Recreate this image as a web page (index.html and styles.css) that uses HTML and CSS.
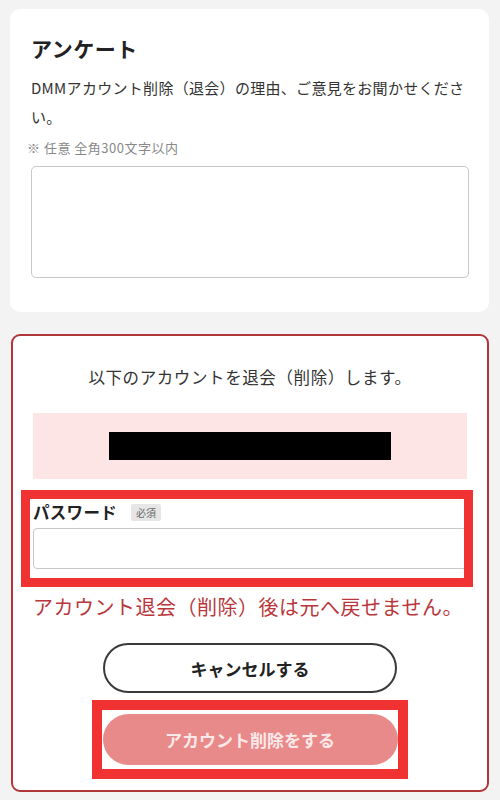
FILE: index.html
```html
<!DOCTYPE html>
<html lang="ja">
<head>
<meta charset="utf-8">
<link rel="stylesheet" href="styles.css">
</head>
<body>
<main class="page">
  <section class="card survey">
    <h2 class="survey-title">アンケート</h2>
    <p class="survey-desc">DMMアカウント削除（退会）の理由、ご意見をお聞かせください。</p>
    <p class="survey-note">※ 任意 全角300文字以内</p>
    <textarea class="survey-input"></textarea>
  </section>
  <section class="card confirm">
    <p class="confirm-lead">以下のアカウントを退会（削除）します。</p>
    <div class="account-box"><span class="account-mask"></span></div>
    <div class="field">
      <div class="field-label"><span class="label-text">パスワード</span><span class="badge">必須</span></div>
      <input class="field-input" type="password">
      <span class="highlight highlight-field"></span>
    </div>
    <p class="warning">アカウント退会（削除）後は元へ戻せません。</p>
    <div class="actions">
      <button class="btn btn-cancel">キャンセルする</button>
      <div class="btn-wrap">
        <button class="btn btn-delete">アカウント削除をする</button>
        <span class="highlight highlight-btn"></span>
      </div>
    </div>
  </section>
</main>
</body>
</html>
```
FILE: styles.css
```css
body {
  margin: 0;
  background: #f3f3f3;
  font-family: "Noto Sans CJK JP", "Noto Sans", sans-serif;
  color: #333;
}
.page {
  padding: 9px 11px 0 10px;
  display: flex;
  flex-direction: column;
  gap: 22px;
}
.card {
  background: #fff;
  border-radius: 10px;
}
.survey {
  padding: 24px 20px 34px 21px;
}
.survey-title {
  margin: 0;
  font-size: 21px;
  line-height: 30px;
  font-weight: 700;
  letter-spacing: 0.5px;
  color: #222;
}
.survey-desc {
  margin: 10px 0 0;
  font-size: 15px;
  line-height: 29px;
  letter-spacing: 0.3px;
  color: #333;
}
.survey-note {
  margin: 8px 0 0 -4px;
  font-size: 13px;
  line-height: 18px;
  letter-spacing: 0.5px;
  color: #888;
}
.survey-input {
  display: block;
  margin-top: 9px;
  width: 100%;
  height: 112px;
  box-sizing: border-box;
  border: 1px solid #c8c8c8;
  border-radius: 5px;
  resize: none;
}
.confirm {
  margin-left: 1px;
  border: 2px solid #b0363a;
  border-radius: 9px;
  padding: 29px 20px 25px;
}
.confirm-lead {
  margin: 0;
  text-align: center;
  font-size: 16.5px;
  line-height: 24px;
  letter-spacing: 0.6px;
  color: #333;
}
.account-box {
  margin-top: 24px;
  height: 66px;
  background: #fde5e5;
  display: flex;
  align-items: center;
  justify-content: center;
}
.account-mask {
  width: 282px;
  height: 28px;
  background: #000;
}
.field {
  position: relative;
  margin-top: 21px;
}
.field-label {
  display: flex;
  align-items: center;
  gap: 14px;
  height: 24px;
}
.label-text {
  font-size: 16.5px;
  font-weight: 700;
  line-height: 24px;
  letter-spacing: 0.3px;
  color: #222;
}
.badge {
  font-size: 10px;
  line-height: 17px;
  padding: 0 5px;
  background: #e6e6e6;
  color: #666;
  border-radius: 2px;
}
.field-input {
  display: block;
  margin-top: 4px;
  width: 100%;
  height: 41px;
  box-sizing: border-box;
  border: 1px solid #c8c8c8;
  border-radius: 4px;
}
.highlight {
  position: absolute;
  border: 9px solid #f03232;
  pointer-events: none;
}
.highlight-field {
  left: -12px;
  right: -6px;
  top: -10px;
  bottom: -18px;
}
.warning {
  margin: 24px 0 0;
  font-size: 20px;
  line-height: 28px;
  letter-spacing: 0.5px;
  white-space: nowrap;
  color: #b9373c;
}
.actions {
  margin-top: 22px;
  display: flex;
  flex-direction: column;
  align-items: center;
  gap: 21px;
}
.btn {
  width: 294px;
  height: 50px;
  border-radius: 26px;
  font-family: inherit;
  font-size: 17px;
  font-weight: 700;
  line-height: 1;
  padding: 0;
}
.btn-cancel {
  background: #fff;
  border: 2px solid #3a3a3a;
  color: #222;
}
.btn-wrap {
  position: relative;
}
.btn-delete {
  display: block;
  width: 295px;
  height: 51px;
  border: none;
  background: #e98a8a;
  color: #fbe9e9;
}
.highlight-btn {
  left: -11px;
  right: -10px;
  top: -14px;
  bottom: -14px;
  border-width: 10px;
}
```
